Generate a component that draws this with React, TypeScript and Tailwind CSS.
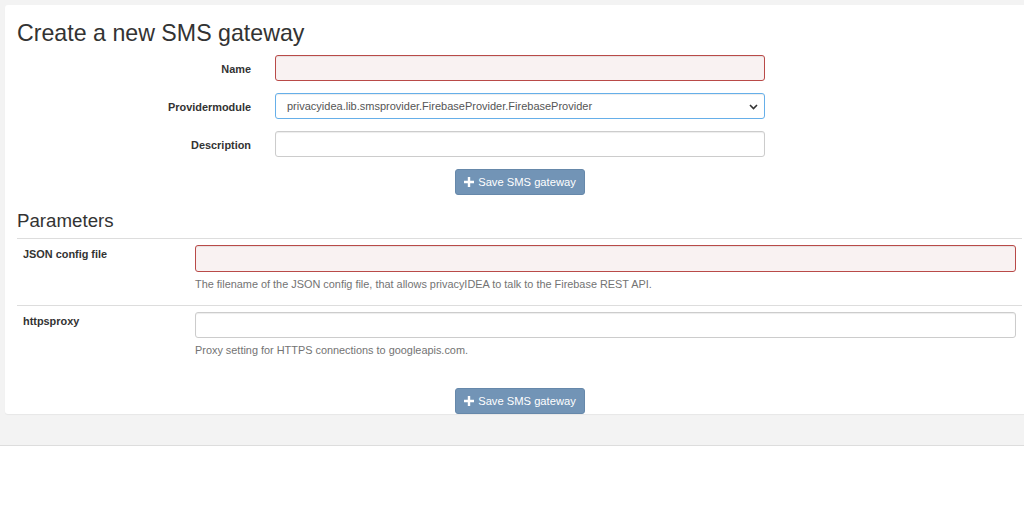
import React from 'react';

const font = { fontFamily: '"Liberation Sans", Arial, sans-serif' };

const PlusIcon = () => (
  <svg width="10" height="10" viewBox="0 0 10 10" className="shrink-0">
    <path d="M3.8 0h2.4v3.8H10v2.4H6.2V10H3.8V6.2H0V3.8h3.8z" fill="#fff" />
  </svg>
);

const SaveButton = () => (
  <button
    type="button"
    className="flex h-[26px] w-[130px] items-center justify-center gap-[4px] rounded-[3px] border border-[#6688aa] bg-[#7294b6] text-[11.2px] text-white"
  >
    <PlusIcon />
    <span>Save SMS gateway</span>
  </button>
);

const inputBase =
  'block h-[26.5px] w-full rounded-[3px] border px-[9px] text-[11px] text-[#555] shadow-[inset_0_1px_1px_rgba(0,0,0,0.075)] outline-none';

interface FormRowProps {
  label: string;
  children: React.ReactNode;
}

const FormRow: React.FC<FormRowProps> = ({ label, children }) => (
  <div className="mb-[11.7px] flex">
    <label className="w-[246px] pr-[12px] pt-[6px] text-right text-[10.9px] font-bold leading-[16px] text-[#333]">
      {label}
    </label>
    <div className="w-[514px] px-[12px]">{children}</div>
  </div>
);

interface ParamRowProps {
  label: string;
  help: string;
  error?: boolean;
}

const ParamRow: React.FC<ParamRowProps> = ({ label, help, error }) => (
  <div className="flex border-t border-[#dddddd]">
    <div className="w-[172px] px-[6px] pt-[7px] text-[10.9px] font-bold leading-[16px] text-[#333]">
      {label}
    </div>
    <div className="flex-1 px-[6px] pt-[6px] pb-[6px]">
      <input
        className={
          error
            ? `${inputBase} border-[#b94a48] bg-[#f9f2f2]`
            : `${inputBase} border-[#cccccc] bg-white`
        }
      />
      <p className="mt-[4px] mb-[7px] text-[10.9px] leading-[16px] text-[#737373]">{help}</p>
    </div>
  </div>
);

export default function App() {
  return (
    <div className="min-h-screen bg-white" style={font}>
      <div className="overflow-hidden border-b border-[#dddddd] bg-[#f3f3f3] pt-[5px] pl-[5px] pb-[31px]">
        <div className="w-[1029px] rounded-[3px] bg-white px-[12px] pt-[16px] shadow-[0_1px_1px_rgba(0,0,0,0.05)]">
          <h2 className="mb-[7.8px] text-[23.2px] leading-[25.7px] text-[#333]">Create a new SMS gateway</h2>

          <FormRow label="Name">
            <input className={`${inputBase} border-[#b94a48] bg-[#f9f2f2]`} />
          </FormRow>

          <FormRow label="Providermodule">
            <div className="relative">
              <select
                defaultValue="firebase"
                className={`${inputBase} appearance-none border-[#66afe9] bg-white pl-[11px] shadow-[inset_0_1px_1px_rgba(0,0,0,0.075),0_0_7px_rgba(102,175,233,0.75)]`}
              >
                <option value="firebase">privacyidea.lib.smsprovider.FirebaseProvider.FirebaseProvider</option>
              </select>
              <svg
                width="9"
                height="6"
                viewBox="0 0 9 6"
                className="pointer-events-none absolute right-[7px] top-[11px]"
              >
                <path d="M1 1l3.5 3.5L8 1" fill="none" stroke="#333" strokeWidth="1.6" />
              </svg>
            </div>
          </FormRow>

          <FormRow label="Description">
            <input className={`${inputBase} border-[#cccccc] bg-white`} />
          </FormRow>

          <div className="flex">
            <div className="w-[246px]" />
            <div className="flex w-[514px] justify-center">
              <SaveButton />
            </div>
          </div>

          <h3 className="mt-[15.6px] mb-[7px] text-[18.7px] leading-[20.6px] text-[#333]">Parameters</h3>

          <div>
            <ParamRow
              label="JSON config file"
              error
              help="The filename of the JSON config file, that allows privacyIDEA to talk to the Firebase REST API."
            />
            <ParamRow label="httpsproxy" help="Proxy setting for HTTPS connections to googleapis.com." />
          </div>

          <div className="mt-[17px] flex">
            <div className="w-[246px]" />
            <div className="flex w-[514px] justify-center">
              <SaveButton />
            </div>
          </div>
        </div>
      </div>
    </div>
  );
}
